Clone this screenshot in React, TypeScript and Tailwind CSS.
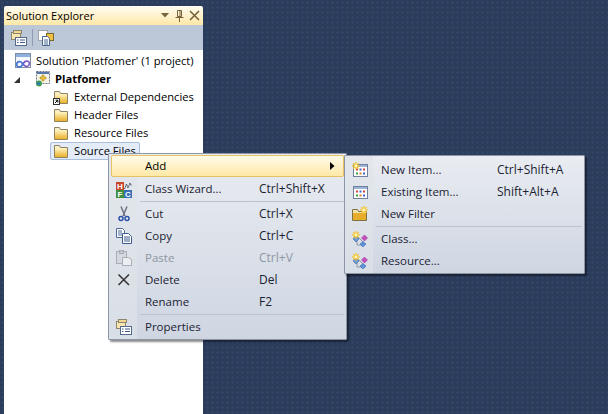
import React from "react";

const Folder = ({ shortcut }: { shortcut?: boolean }) => (
  <svg width="16" height="16" viewBox="0 0 16 16" className="shrink-0">
    <defs>
      <linearGradient id="fg" x1="0" y1="0" x2="0" y2="1">
        <stop offset="0" stopColor="#fff6c4" />
        <stop offset="1" stopColor="#eab02a" />
      </linearGradient>
    </defs>
    <path d="M1.500 14.500V2.500h5l1 2h7v10z" fill="#f6ecc8" stroke="#8f8260" />
    <rect x="2" y="5" width="12" height="9" fill="url(#fg)" />
    {shortcut && (
      <g>
        <rect x="0.500" y="9.500" width="6" height="6" fill="#fff" stroke="#333" />
        <path d="M2 14l2.500-2.500M2.500 11.200h2.300v2.300" fill="none" stroke="#000" />
      </g>
    )}
  </svg>
);

const SolutionIcon = () => (
  <svg width="16" height="16" viewBox="0 0 16 16" className="shrink-0">
    <rect x="0.500" y="0.500" width="15" height="14" fill="#f4f7fc" stroke="#7c8ea8" />
    <rect x="1" y="1" width="14" height="3" fill="#8fb0dc" />
    <path d="M8 11c-2-3-5-3-6-1s0 4 2 4 3-1 4-3 2-3 4-3 3 2 2 4-4 2-6-1z" fill="none" stroke="#7a4fc0" strokeWidth="1.500" />
    <path d="M8 11c-2-3-5-3-6-1s0 4 2 4 3-1 4-3" fill="none" stroke="#3c7fd8" strokeWidth="1.500" />
  </svg>
);

const ProjectIcon = () => (
  <svg width="16" height="16" viewBox="0 0 16 16" className="shrink-0">
    <rect x="2.500" y="0.500" width="13" height="12" fill="#f6f4e4" stroke="#66728a" strokeDasharray="2 1" />
    <rect x="3" y="1" width="12" height="2" fill="#5577aa" />
    <path d="M8 4h2v2h2v2h-2v2H8V8H6V6h2z" fill="#e8c23c" stroke="#a08020" strokeWidth="0.500" />
    <circle cx="5" cy="12.500" r="3" fill="#3f9e58" />
    <path d="M3 11.500h3v2H3z" fill="#2f6fc0" />
  </svg>
);

const PropsIcon = () => (
  <svg width="16" height="16" viewBox="0 0 16 16" className="shrink-0">
    <rect x="0.500" y="2.500" width="9" height="7" fill="#f7e6ad" stroke="#8c8670" />
    <rect x="2.500" y="0.500" width="8" height="3" fill="#f0d890" stroke="#8c8670" />
    <rect x="4.500" y="7.500" width="11" height="8" fill="#fff" stroke="#55698a" />
    <path d="M6 10h1.500M9 10h5M6 12.500h1.500M9 12.500h5" stroke="#44598a" />
  </svg>
);

const ToolbarShowAll = () => (
  <svg width="16" height="16" viewBox="0 0 16 16" className="shrink-0">
    <rect x="0.500" y="0.500" width="9" height="10" fill="#fff" stroke="#666" strokeDasharray="1 1" />
    <rect x="8.500" y="3.500" width="7" height="7" fill="#f0c040" stroke="#7a6a30" />
    <path d="M4.500 6.500h5l2 2v7h-7z" fill="#fff" stroke="#4a6690" />
    <path d="M6 10h4M6 12h4M6 14h4" stroke="#4a6690" />
  </svg>
);

const WizardIcon = () => (
  <svg width="16" height="17" viewBox="0 0 16 17" className="shrink-0">
    <rect x="0" y="1" width="8" height="8" fill="#c8452c" />
    <rect x="0" y="9" width="8" height="8" fill="#3f8f3f" />
    <rect x="8" y="9" width="8" height="8" fill="#3a70b8" />
    <text x="4" y="7.800" textAnchor="middle" fontSize="8" fontWeight="700" fontFamily="Liberation Sans" fill="#fff">H</text>
    <text x="4" y="15.800" textAnchor="middle" fontSize="8" fontWeight="700" fontFamily="Liberation Sans" fill="#fff">F</text>
    <text x="12" y="15.800" textAnchor="middle" fontSize="8" fontWeight="700" fontFamily="Liberation Sans" fill="#fff">C</text>
    <path d="M8.500 8l2-5 1.500 4 2-5 1.500 3" stroke="#3d4a5a" fill="none" strokeDasharray="1.500 .5" />
  </svg>
);

const CutIcon = () => (
  <svg width="16" height="16" viewBox="0 0 16 16" className="shrink-0">
    <path d="M5 0.500l4 9.500M11 0.500L7 10" stroke="#6b7280" strokeWidth="1.500" fill="none" />
    <circle cx="5" cy="12.500" r="2" fill="none" stroke="#2a50a8" strokeWidth="1.500" />
    <circle cx="11" cy="12.500" r="2" fill="none" stroke="#2a50a8" strokeWidth="1.500" />
  </svg>
);

const CopyIcon = () => (
  <svg width="16" height="16" viewBox="0 0 16 16" className="shrink-0">
    <path d="M0.500 0.500h6l2 2v7h-8z" fill="#fff" stroke="#4a6a9c" />
    <path d="M2 3h4M2 5h4M2 7h4" stroke="#4a6a9c" />
    <path d="M6.500 5.500h6l3 3v7h-9z" fill="#fff" stroke="#3a5a90" />
    <path d="M8 9h6M8 11h6M8 13h6" stroke="#3a5a90" />
  </svg>
);

const PasteIcon = () => (
  <svg width="16" height="16" viewBox="0 0 16 16" className="shrink-0">
    <rect x="0.500" y="1.500" width="10" height="12" fill="#d5d8de" stroke="#a9adb5" />
    <rect x="3.500" y="0.500" width="4" height="3" fill="#c4c8cf" stroke="#a9adb5" />
    <path d="M6.500 7.500h6l3 2v6h-9z" fill="#eceef2" stroke="#a9adb5" />
  </svg>
);

const DeleteIcon = () => (
  <svg width="16" height="16" viewBox="0 0 16 16" className="shrink-0">
    <path d="M2.500 2.500l10.500 10.500M13 2.500L2.500 13" stroke="#333" strokeWidth="1.500" />
  </svg>
);

const Spark = ({ x, y }: { x: number; y: number }) => (
  <g transform={`translate(${x} ${y}) scale(1.300)`}>
    <path d="M3 0v6M0 3h6M1 1l4 4M5 1L1 5" stroke="#f2c531" strokeWidth="1" />
    <rect x="2" y="2" width="2" height="2" fill="#fff6c0" />
  </g>
);

const ItemIcon = ({ spark }: { spark?: boolean }) => (
  <svg width="16" height="16" viewBox="0 0 16 16" className="shrink-0">
    <rect x="1.500" y="2.500" width="14" height="12" fill="#fff" stroke="#6f7f9c" />
    <rect x="2" y="3" width="13" height="2" fill="#9db4d8" />
    <rect x="4" y="6.500" width="2" height="2" fill="#d84040" />
    <rect x="7.500" y="6.500" width="2" height="2" fill="#4060d8" />
    <rect x="11" y="6.500" width="2" height="2" fill="#d84040" />
    <rect x="4" y="10.500" width="2" height="2" fill="#40a040" />
    <rect x="7.500" y="10.500" width="2" height="2" fill="#e08020" />
    <rect x="11" y="10.500" width="2" height="2" fill="#4060d8" />
    {spark && <Spark x={0} y={0} />}
  </svg>
);

const NewFilterIcon = () => (
  <svg width="16" height="16" viewBox="0 0 16 16" className="shrink-0">
    <path d="M0.500 14.500V3.500h5l1 2h8v9z" fill="#f5e2a8" stroke="#7d7148" />
    <rect x="1" y="7" width="13" height="7" fill="#e7ad2a" />
    <Spark x={8} y={0} />
  </svg>
);

const ClassIcon = () => (
  <svg width="16" height="16" viewBox="0 0 16 16" className="shrink-0">
    <path d="M6 6l5 5M5 8v6h5" stroke="#8a94a8" fill="none" />
    <path d="M12.500 4l3 3-3 3-3-3z" fill="#c84fc0" stroke="#8a2f90" strokeWidth="0.500" />
    <path d="M4 5l3 3-3 3-3-3z" fill="#6a9ad8" stroke="#2f5a9c" strokeWidth="0.500" />
    <path d="M11 10.500l3 2.500-3 3-3-3z" fill="#5a94dc" stroke="#2f5a9c" strokeWidth="0.500" />
    <Spark x={0} y={0} />
  </svg>
);

const TreeRow = ({
  indent,
  icon,
  label,
  bold,
  selected,
}: {
  indent: string;
  icon: React.ReactNode;
  label: string;
  bold?: boolean;
  selected?: boolean;
}) => (
  <div className={`flex h-[18px] items-center ${indent}`}>
    <div
      className={`flex h-[18px] items-center gap-[5px] rounded-[2px] pr-[3px] ${
        selected ? "-ml-[3px] border border-[#a9bfdc] bg-[#e3ecf8] pl-[2px]" : ""
      }`}
    >
      {icon}
      <span className={`whitespace-nowrap ${bold ? "font-bold" : ""}`}>{label}</span>
    </div>
  </div>
);

const MenuRow = ({
  icon,
  label,
  shortcut,
  disabled,
  active,
  arrow,
  labelWidth,
  strip,
}: {
  icon?: React.ReactNode;
  label: string;
  shortcut?: string;
  disabled?: boolean;
  active?: boolean;
  arrow?: boolean;
  labelWidth: string;
  strip: string;
}) => (
  <div
    className={`relative flex h-[22px] items-center rounded-[2px] ${
      active
        ? "-mt-px mb-px border border-[#e5c365] bg-gradient-to-b from-[#fffbe8] to-[#ffe8a6] text-black"
        : disabled
          ? "text-[#8f96a3]"
          : "text-[#1b2333]"
    }`}
  >
    <div className={`flex shrink-0 items-center ${strip}`}>{icon}</div>
    <span className={`whitespace-nowrap ${labelWidth}`}>{label}</span>
    {shortcut && <span className="whitespace-nowrap text-[12px]">{shortcut}</span>}
    {arrow && (
      <svg width="5" height="8" viewBox="0 0 5 8" className="absolute right-[8px] top-[6px]">
        <path d="M0 0l4.500 4L0 8z" fill="#000" />
      </svg>
    )}
  </div>
);

const Sep = ({ inset }: { inset: string }) => (
  <div className="flex h-[3px] items-center">
    <div className={`h-px flex-1 bg-[#bcc3d0] ${inset}`} />
  </div>
);

const STRIP_MAIN = "w-[34px] pl-[5px]";
const COL_MAIN = "w-[114px]";
const STRIP_SUB = "w-[36px] pl-[7px]";
const COL_SUB = "w-[116px]";

export default function App() {
  return (
    <div className="relative h-[414px] w-[608px] overflow-hidden bg-[#2c3d5c] bg-[radial-gradient(#354970_0.8px,transparent_1.2px)] bg-[length:5px_5px] font-['Open_Sans',sans-serif] text-[11.5px] leading-none text-black">
      <div className="ml-[4px] flex h-[414px] w-[199px] flex-col pt-[6px]">
        <div className="flex h-[19px] items-center justify-between rounded-t-[2px] bg-gradient-to-b from-[#fffcf2] to-[#ffe8a6] pl-[2px] pr-[3px]">
          <span className="text-[11px]">Solution Explorer</span>
          <div className="flex items-center gap-[5px]">
            <svg width="9" height="5" viewBox="0 0 9 5"><path d="M0 0h8L4 4.500z" fill="#75633a" /></svg>
            <svg width="9" height="12" viewBox="0 0 9 12">
              <path d="M2.500 .5h4v6h-4zM.5 7.500h8M4.500 8v4M5 1v5" fill="none" stroke="#75633a" />
            </svg>
            <svg width="11" height="11" viewBox="0 0 11 11">
              <path d="M1 1l9 9M10 1l-9 9" stroke="#75633a" strokeWidth="1.600" />
            </svg>
          </div>
        </div>
        <div className="flex h-[25px] items-center gap-[5px] bg-[#bcc7d8] pl-[7px]">
          <PropsIcon />
          <div className="h-[17px] w-px bg-[#8e9bb0]" />
          <ToolbarShowAll />
        </div>
        <div className="flex-1 bg-white pt-[2px] text-[11.2px]">
          <TreeRow indent="pl-[11px]" icon={<SolutionIcon />} label="Solution 'Platfomer' (1 project)" />
          <div className="relative">
            <svg width="7" height="7" viewBox="0 0 7 7" className="absolute left-[10px] top-[7px]">
              <path d="M6 0v6H0z" fill="#333" />
            </svg>
            <TreeRow indent="pl-[30px]" icon={<ProjectIcon />} label="Platfomer" bold />
          </div>
          <TreeRow indent="pl-[49px]" icon={<Folder shortcut />} label="External Dependencies" />
          <TreeRow indent="pl-[49px]" icon={<Folder />} label="Header Files" />
          <TreeRow indent="pl-[49px]" icon={<Folder />} label="Resource Files" />
          <TreeRow indent="pl-[49px]" icon={<Folder />} label="Source Files" selected />
        </div>
      </div>

      <div className="absolute left-[108px] top-[153px] w-[239px] rounded-[1px] border border-[#8d96a6] bg-gradient-to-b from-[#e9ecf1] to-[#cfd6e2] px-[2px] pt-[2px] pb-[1px] shadow-[2px_2px_2px_rgba(0,0,0,0.45)]">
        <div className="absolute bottom-0 left-0 top-0 w-[28px] bg-[#dfe4ea] opacity-60" />
        <MenuRow active arrow label="Add" labelWidth={COL_MAIN} strip="w-[33px]" />
        <MenuRow icon={<WizardIcon />} label="Class Wizard..." shortcut="Ctrl+Shift+X" labelWidth={COL_MAIN} strip={STRIP_MAIN} />
        <Sep inset="ml-[29px]" />
        <MenuRow icon={<CutIcon />} label="Cut" shortcut="Ctrl+X" labelWidth={COL_MAIN} strip={STRIP_MAIN} />
        <MenuRow icon={<CopyIcon />} label="Copy" shortcut="Ctrl+C" labelWidth={COL_MAIN} strip={STRIP_MAIN} />
        <MenuRow icon={<PasteIcon />} label="Paste" shortcut="Ctrl+V" disabled labelWidth={COL_MAIN} strip={STRIP_MAIN} />
        <MenuRow icon={<DeleteIcon />} label="Delete" shortcut="Del" labelWidth={COL_MAIN} strip={STRIP_MAIN} />
        <MenuRow label="Rename" shortcut="F2" labelWidth={COL_MAIN} strip={STRIP_MAIN} />
        <Sep inset="ml-[29px]" />
        <MenuRow icon={<PropsIcon />} label="Properties" labelWidth={COL_MAIN} strip={STRIP_MAIN} />
      </div>

      <div className="absolute left-[344px] top-[155px] w-[241px] rounded-[1px] border border-[#8d96a6] bg-gradient-to-b from-[#e9ecf1] to-[#cfd6e2] pt-[3px] pr-[2px] pb-[1px] shadow-[2px_2px_2px_rgba(0,0,0,0.45)]">
        <div className="absolute bottom-0 left-0 top-0 w-[28px] bg-[#dfe4ea] opacity-60" />
        <MenuRow icon={<ItemIcon spark />} label="New Item..." shortcut="Ctrl+Shift+A" labelWidth={COL_SUB} strip={STRIP_SUB} />
        <MenuRow icon={<ItemIcon />} label="Existing Item..." shortcut="Shift+Alt+A" labelWidth={COL_SUB} strip={STRIP_SUB} />
        <MenuRow icon={<NewFilterIcon />} label="New Filter" labelWidth={COL_SUB} strip={STRIP_SUB} />
        <Sep inset="ml-[31px]" />
        <MenuRow icon={<ClassIcon />} label="Class..." labelWidth={COL_SUB} strip={STRIP_SUB} />
        <MenuRow icon={<ClassIcon />} label="Resource..." labelWidth={COL_SUB} strip={STRIP_SUB} />
      </div>
    </div>
  );
}
